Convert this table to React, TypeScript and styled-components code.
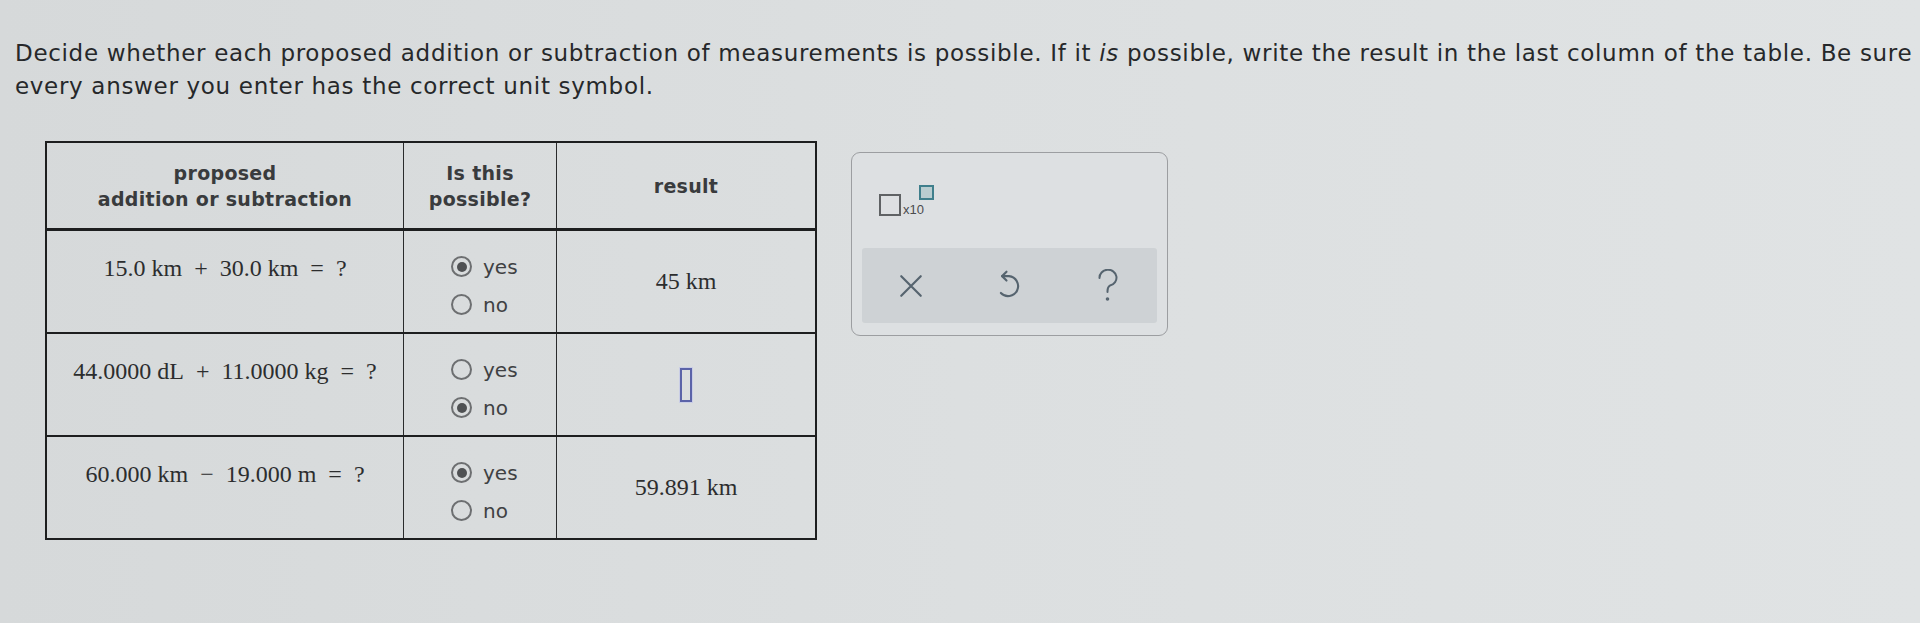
import React from "react";
import styled, { createGlobalStyle } from "styled-components";

const Global = createGlobalStyle`
  html, body { margin: 0; padding: 0; background: #dadddf; }
  body { font-family: "DejaVu Sans", Verdana, sans-serif; color: #2a2b2c; }
`;

const Page = styled.div`
  width: 1920px;
  height: 623px;
  overflow: hidden;
  background: linear-gradient(90deg, #d6d9da 0%, #dcdfe0 50%, #e0e3e4 100%);
  box-sizing: border-box;
  padding: 37px 5px 0 15px;
`;

const Prompt = styled.p`
  margin: 0;
  font-size: 23px;
  letter-spacing: 0.68px;
  line-height: 33px;
  width: 1900px;
  color: #26282a;
`;

const Work = styled.div`
  display: flex;
  align-items: flex-start;
  gap: 34px;
  margin-top: 38px;
  padding-left: 30px;
`;

const Table = styled.table`
  border-collapse: collapse;
  table-layout: fixed;
  border: 2px solid #1d1e1f;
`;

const HeadCell = styled.th<{ $w: number }>`
  width: ${(p) => p.$w}px;
  height: 85px;
  padding: 0;
  border-left: 1px solid #2a2b2c;
  border-right: 1px solid #2a2b2c;
  border-bottom: 3px solid #1d1e1f;
  font-family: "DejaVu Sans", Verdana, sans-serif;
  font-weight: bold;
  font-size: 19px;
  letter-spacing: 0.3px;
  line-height: 26px;
  color: #393b3d;
  text-align: center;
  vertical-align: middle;
`;

const Cell = styled.td<{ $align?: string }>`
  height: 101px;
  padding: 0;
  border-left: 1px solid #2a2b2c;
  border-right: 1px solid #2a2b2c;
  border-bottom: 2px solid #1d1e1f;
  vertical-align: ${(p) => p.$align || "top"};
  text-align: center;
`;

const MathExpr = styled.div`
  margin-top: 24px;
  font-family: "Liberation Serif", "Times New Roman", serif;
  font-size: 24px;
  color: #2c2d2e;
  white-space: pre;
`;

const Op = styled.span`
  margin: 0 12px;
`;

const Radios = styled.div`
  display: flex;
  flex-direction: column;
  gap: 9px;
  padding: 21px 0 0 47px;
`;

const RadioRow = styled.label`
  display: flex;
  align-items: center;
  gap: 11px;
  font-family: "DejaVu Sans", Verdana, sans-serif;
  font-size: 20px;
  color: #3f4143;
  height: 29px;
`;

const Dot = styled.span<{ $on?: boolean }>`
  width: 21px;
  height: 21px;
  border-radius: 50%;
  border: 2px solid #6d6f71;
  box-sizing: border-box;
  display: flex;
  align-items: center;
  justify-content: center;
  &::after {
    content: "";
    width: 10px;
    height: 10px;
    border-radius: 50%;
    background: ${(p) => (p.$on ? "#4f5153" : "transparent")};
  }
`;

const Result = styled.div`
  font-family: "Liberation Serif", "Times New Roman", serif;
  font-size: 24px;
  color: #2c2d2e;
`;

const EmptyInput = styled.span`
  display: inline-block;
  width: 12px;
  height: 34px;
  border: 2px solid #5b63a8;
  box-shadow: 0 0 0 1px #c9cde6;
  box-sizing: border-box;
  vertical-align: middle;
`;

const Panel = styled.div`
  margin-top: 11px;
  width: 317px;
  height: 184px;
  box-sizing: border-box;
  border: 1.5px solid #9c9ea1;
  border-radius: 9px;
  padding: 0 10px 12px 10px;
  display: flex;
  flex-direction: column;
  justify-content: space-between;
  background: #dde0e2;
`;

const Sci = styled.div`
  position: relative;
  margin: 41px 0 0 17px;
  width: 60px;
  height: 24px;
`;

const BigBox = styled.span`
  position: absolute;
  left: 0;
  top: 0;
  width: 22px;
  height: 22px;
  border: 2px solid #5f6264;
  box-sizing: border-box;
`;

const Times = styled.span`
  position: absolute;
  left: 24px;
  top: 8px;
  font-family: "Liberation Sans", Arial, sans-serif;
  font-size: 13px;
  color: #4a4c4e;
`;

const SupBox = styled.span`
  position: absolute;
  left: 40px;
  top: -9px;
  width: 15px;
  height: 15px;
  border: 2px solid #3f7f8c;
  background: #b9cdd0;
  box-sizing: border-box;
`;

const Toolbar = styled.div`
  height: 75px;
  background: #ced2d5;
  border-radius: 3px;
  display: grid;
  grid-template-columns: repeat(3, 1fr);
  align-items: center;
  justify-items: center;
`;

const IconBtn = styled.button`
  border: 0;
  background: none;
  padding: 0;
  width: 34px;
  height: 38px;
  display: flex;
  align-items: center;
  justify-content: center;
  color: #56646f;
  cursor: pointer;
`;

const rows = [
  {
    expr: ["15.0 km", "+", "30.0 km", "=", "?"],
    yes: true,
    result: "45 km",
  },
  {
    expr: ["44.0000 dL", "+", "11.0000 kg", "=", "?"],
    yes: false,
    result: null,
  },
  {
    expr: ["60.000 km", "−", "19.000 m", "=", "?"],
    yes: true,
    result: "59.891 km",
  },
];

function Expr({ parts }: { parts: string[] }) {
  return (
    <MathExpr>
      {parts[0]}
      <Op>{parts[1]}</Op>
      {parts[2]}
      <Op>{parts[3]}</Op>
      {parts[4]}
    </MathExpr>
  );
}

export default function App() {
  return (
    <Page>
      <Global />
      <Prompt>
        Decide whether each proposed addition or subtraction of measurements is possible. If it{" "}
        <i>is</i> possible, write the result in the last column of the table. Be sure every answer
        you enter has the correct unit symbol.
      </Prompt>
      <Work>
        <Table>
          <thead>
            <tr>
              <HeadCell $w={356}>
                proposed
                <br />
                addition or subtraction
              </HeadCell>
              <HeadCell $w={152}>
                Is this
                <br />
                possible?
              </HeadCell>
              <HeadCell $w={258}>result</HeadCell>
            </tr>
          </thead>
          <tbody>
            {rows.map((r, i) => (
              <tr key={i}>
                <Cell>
                  <Expr parts={r.expr} />
                </Cell>
                <Cell style={{ textAlign: "left" }}>
                  <Radios>
                    <RadioRow>
                      <Dot $on={r.yes} />
                      yes
                    </RadioRow>
                    <RadioRow>
                      <Dot $on={!r.yes} />
                      no
                    </RadioRow>
                  </Radios>
                </Cell>
                <Cell $align="middle">
                  {r.result ? <Result>{r.result}</Result> : <EmptyInput />}
                </Cell>
              </tr>
            ))}
          </tbody>
        </Table>
        <Panel>
          <Sci>
            <BigBox />
            <Times>x10</Times>
            <SupBox />
          </Sci>
          <Toolbar>
            <IconBtn aria-label="clear">
              <svg width="26" height="26" viewBox="0 0 24 24" fill="none" stroke="currentColor" strokeWidth="2" strokeLinecap="round">
                <path d="M3 3 L21 21 M21 3 L3 21" />
              </svg>
            </IconBtn>
            <IconBtn aria-label="undo">
              <svg width="30" height="33" viewBox="0 0 24 26" fill="none" stroke="currentColor" strokeWidth="1.7" strokeLinecap="round" strokeLinejoin="round">
                <path d="M10 2 L6.5 5.5 L10 9" />
                <path d="M6.5 5.5 H12 A8 8 0 1 1 5.5 19" />
              </svg>
            </IconBtn>
            <IconBtn aria-label="help">
              <svg width="22" height="34" viewBox="0 0 22 34" fill="none" stroke="currentColor" strokeWidth="2" strokeLinecap="round">
                <path d="M2.5 9 A8.5 8 0 1 1 13 16.5 C11 17.7 10.5 19 10.5 22 V23" />
                <circle cx="10.5" cy="30" r="0.8" fill="currentColor" />
              </svg>
            </IconBtn>
          </Toolbar>
        </Panel>
      </Work>
    </Page>
  );
}
